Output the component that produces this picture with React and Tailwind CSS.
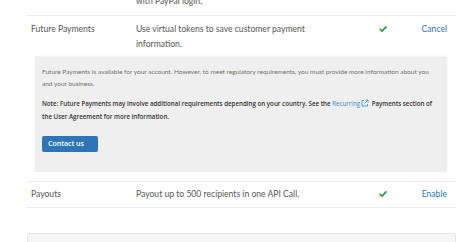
import React from "react";

const Check = () => (
  <svg width="8" height="6" viewBox="0 0 9 7" className="block">
    <path d="M1 3.8 L3.4 6 L8 1" fill="none" stroke="#2e9a3f" strokeWidth="1.9" strokeLinecap="round" strokeLinejoin="round" />
  </svg>
);

const ExternalIcon = () => (
  <svg width="8" height="8" viewBox="0 0 8 8" className="inline-block align-[-1px] mx-[1px]">
    <path d="M3 1.5 H1 V7 H6.5 V5" fill="none" stroke="#3a86c8" strokeWidth="0.8" />
    <path d="M4.5 1 H7 V3.5 M7 1 L3.5 4.5" fill="none" stroke="#3a86c8" strokeWidth="0.8" />
  </svg>
);

const Row = ({ name, children, action, pad }) => (
  <div className={`flex border-t border-[#ebebeb] text-[8.6px] leading-[15px] text-[#555] font-['Lato'] ${pad}`}>
    <div className="w-[109px] pl-[4px]">{name}</div>
    <div className="flex-1">
      <div className="w-[200px]">{children}</div>
    </div>
    <div className="w-[26px] flex justify-center pt-[4px]">
      <Check />
    </div>
    <div className="w-[60px] text-right pr-[9px] text-[#2c73b3]">{action}</div>
  </div>
);

export default function App() {
  return (
    <div className="w-[474px] h-[242px] overflow-hidden bg-white">
      <div className="ml-[27px] w-[429px]">
        <div className="h-[15px] overflow-hidden">
          <div className="pl-[109px] -mt-[6px] text-[8.6px] leading-[15px] text-[#555] font-['Lato']">
            with PayPal login.
          </div>
        </div>

        <Row name="Future Payments" action="Cancel" pad="pt-[6px] pb-[5px]">
          Use virtual tokens to save customer payment information.
        </Row>

        <div className="ml-[8px] w-[412px] bg-[#efefef] border-t border-[#ebebeb] shadow-[0_-1px_2px_rgba(0,0,0,0.06)] pt-[8px] pb-[20px] px-[7px] text-[6.5px] leading-[12px] text-[#6f6f6f]">
          <p className="mb-[7px] font-['Lato']">
            Future Payments is available for your account. However, to meet regulatory requirements, you must provide more information about you and your business.
          </p>
          <p className="font-['Open_Sans'] text-[6.2px] font-semibold text-[#333] leading-[13px]">
            Note: Future Payments may involve additional requirements depending on your country. See the{" "}
            <span className="text-[#3a86c8] font-normal">Recurring</span>
            <ExternalIcon /> Payments section of the User Agreement for more information.
          </p>
          <button className="mt-[13px] block w-[56px] h-[16px] rounded-[2px] bg-[#2e75b6] text-white text-[7px] font-['Open_Sans'] font-semibold text-left pl-[6px]">
            Contact us
          </button>
        </div>

        <div className="h-[9px]" />

        <Row name="Payouts" action="Enable" pad="pt-[5px] pb-[5px]">
          Payout up to 500 recipients in one API Call.
        </Row>
        <div className="border-t border-[#ebebeb]" />

        <div className="h-[25px]" />
        <div className="h-[20px] bg-[#f6f6f6] border border-[#e6e6e6] rounded-[2px]" />
      </div>
    </div>
  );
}
